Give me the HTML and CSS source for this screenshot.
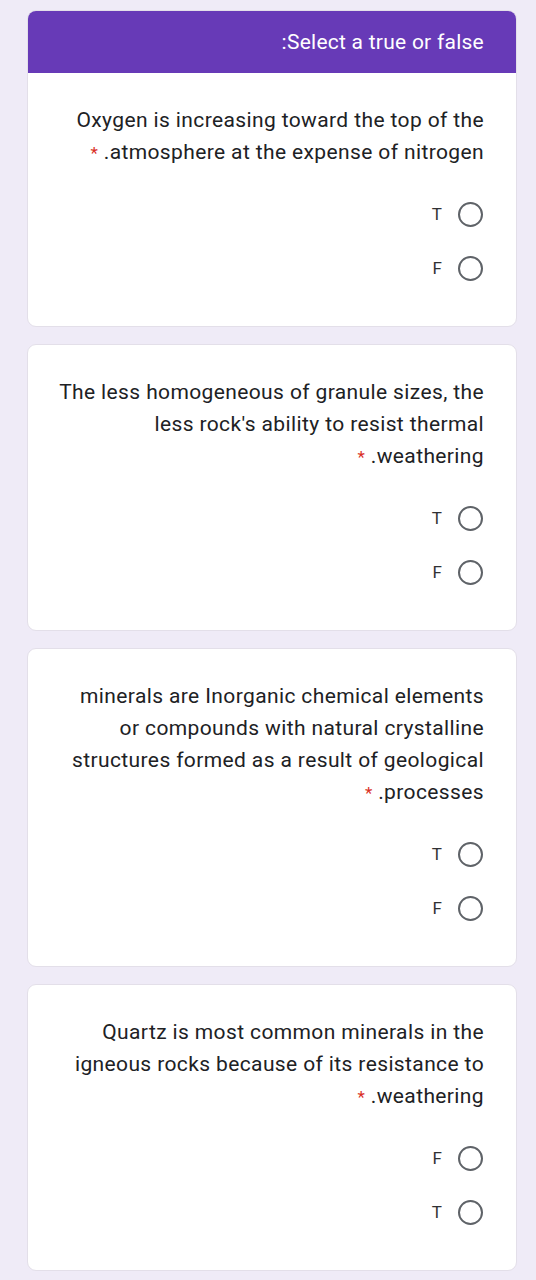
FILE: index.html
```html
<!DOCTYPE html>
<html>
<head>
<meta charset="utf-8">
<link rel="stylesheet" href="styles.css">
</head>
<body>
<main class="form">
  <section class="card first">
    <header class="banner">:Select a true or false</header>
    <div class="body">
      <div class="question">
        <span class="line">Oxygen is increasing toward the top of the</span>
        <span class="line"><span class="req">*</span> .atmosphere at the expense of nitrogen</span>
      </div>
      <div class="options">
        <label class="option"><span class="lbl">T</span><span class="radio"></span></label>
        <label class="option"><span class="lbl">F</span><span class="radio"></span></label>
      </div>
    </div>
  </section>

  <section class="card">
    <div class="body">
      <div class="question">
        <span class="line">The less homogeneous of granule sizes, the</span>
        <span class="line">less rock's ability to resist thermal</span>
        <span class="line"><span class="req">*</span> .weathering</span>
      </div>
      <div class="options">
        <label class="option"><span class="lbl">T</span><span class="radio"></span></label>
        <label class="option"><span class="lbl">F</span><span class="radio"></span></label>
      </div>
    </div>
  </section>

  <section class="card">
    <div class="body">
      <div class="question">
        <span class="line">minerals are Inorganic chemical elements</span>
        <span class="line">or compounds with natural crystalline</span>
        <span class="line">structures formed as a result of geological</span>
        <span class="line"><span class="req">*</span> .processes</span>
      </div>
      <div class="options">
        <label class="option"><span class="lbl">T</span><span class="radio"></span></label>
        <label class="option"><span class="lbl">F</span><span class="radio"></span></label>
      </div>
    </div>
  </section>

  <section class="card">
    <div class="body">
      <div class="question">
        <span class="line">Quartz is most common minerals in the</span>
        <span class="line">igneous rocks because of its resistance to</span>
        <span class="line"><span class="req">*</span> .weathering</span>
      </div>
      <div class="options">
        <label class="option"><span class="lbl">F</span><span class="radio"></span></label>
        <label class="option"><span class="lbl">T</span><span class="radio"></span></label>
      </div>
    </div>
  </section>
</main>
</body>
</html>
```
FILE: styles.css
```css
html, body {
  margin: 0;
  padding: 0;
  background: #efebf7;
}

body {
  font-family: Roboto, "Open Sans", "Liberation Sans", sans-serif;
  color: #202124;
}

.form {
  display: flex;
  flex-direction: column;
  gap: 17px;
  padding: 10px 19px 10px 27px;
}

.card {
  background: #ffffff;
  border-radius: 9px;
  border: 1px solid #e3dfe9;
  overflow: hidden;
}

.banner {
  background: #673ab7;
  color: #ffffff;
  height: 62px;
  display: flex;
  align-items: center;
  justify-content: flex-end;
  padding-right: 32px;
  font-size: 21px;
  letter-spacing: 0.25px;
}

.body {
  padding: 31px 32px 34px 32px;
}

.question {
  display: flex;
  flex-direction: column;
  align-items: flex-end;
  font-size: 21px;
  letter-spacing: 0.38px;
  line-height: 32px;
}

.line {
  display: block;
  height: 32px;
  white-space: nowrap;
}

.req {
  color: #d93025;
  font-size: 17px;
  line-height: 0;
}

.options {
  display: flex;
  flex-direction: column;
  align-items: flex-end;
  gap: 6px;
  margin-top: 22px;
}

.option {
  display: flex;
  align-items: center;
  gap: 16px;
  height: 48px;
}

.lbl {
  font-size: 17px;
  color: #303134;
}

.radio {
  box-sizing: border-box;
  width: 25px;
  height: 25px;
  border: 2.5px solid #5f6368;
  border-radius: 50%;
  margin-right: 1px;
}
```
